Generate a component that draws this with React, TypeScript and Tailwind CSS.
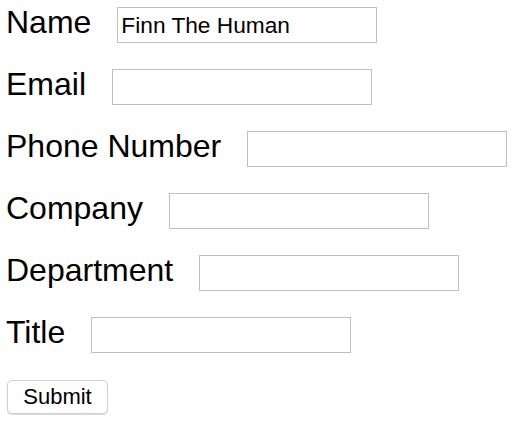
import { useState } from 'react';

const fields = ['Name', 'Email', 'Phone Number', 'Company', 'Department', 'Title'];

export default function App() {
  const [values, setValues] = useState<Record<string, string>>({ Name: 'Finn The Human' });

  return (
    <div className="min-h-screen bg-white text-black font-['Liberation_Sans',Arial,sans-serif]">
      <form className="flex flex-col gap-[26px] pl-[6px] pt-[7px]" onSubmit={(e) => e.preventDefault()}>
        {fields.map((field) => (
          <div key={field} className="flex items-start gap-[26px]">
            <label className="text-[32px] leading-[30px] whitespace-nowrap">{field}</label>
            <input
              type="text"
              value={values[field] || ''}
              onChange={(e) => setValues({ ...values, [field]: e.target.value })}
              className="h-[36px] w-[260px] border border-[#c0c0c0] bg-white px-[3px] text-[22.7px] outline-none"
            />
          </div>
        ))}
        <div className="pl-px pt-px">
          <button
            type="submit"
            className="h-[34px] w-[101px] rounded-[5px] border border-[#d0d0d0] bg-white text-[22px] leading-none shadow-[0_1px_1px_rgba(0,0,0,0.15)]"
          >
            Submit
          </button>
        </div>
      </form>
    </div>
  );
}
